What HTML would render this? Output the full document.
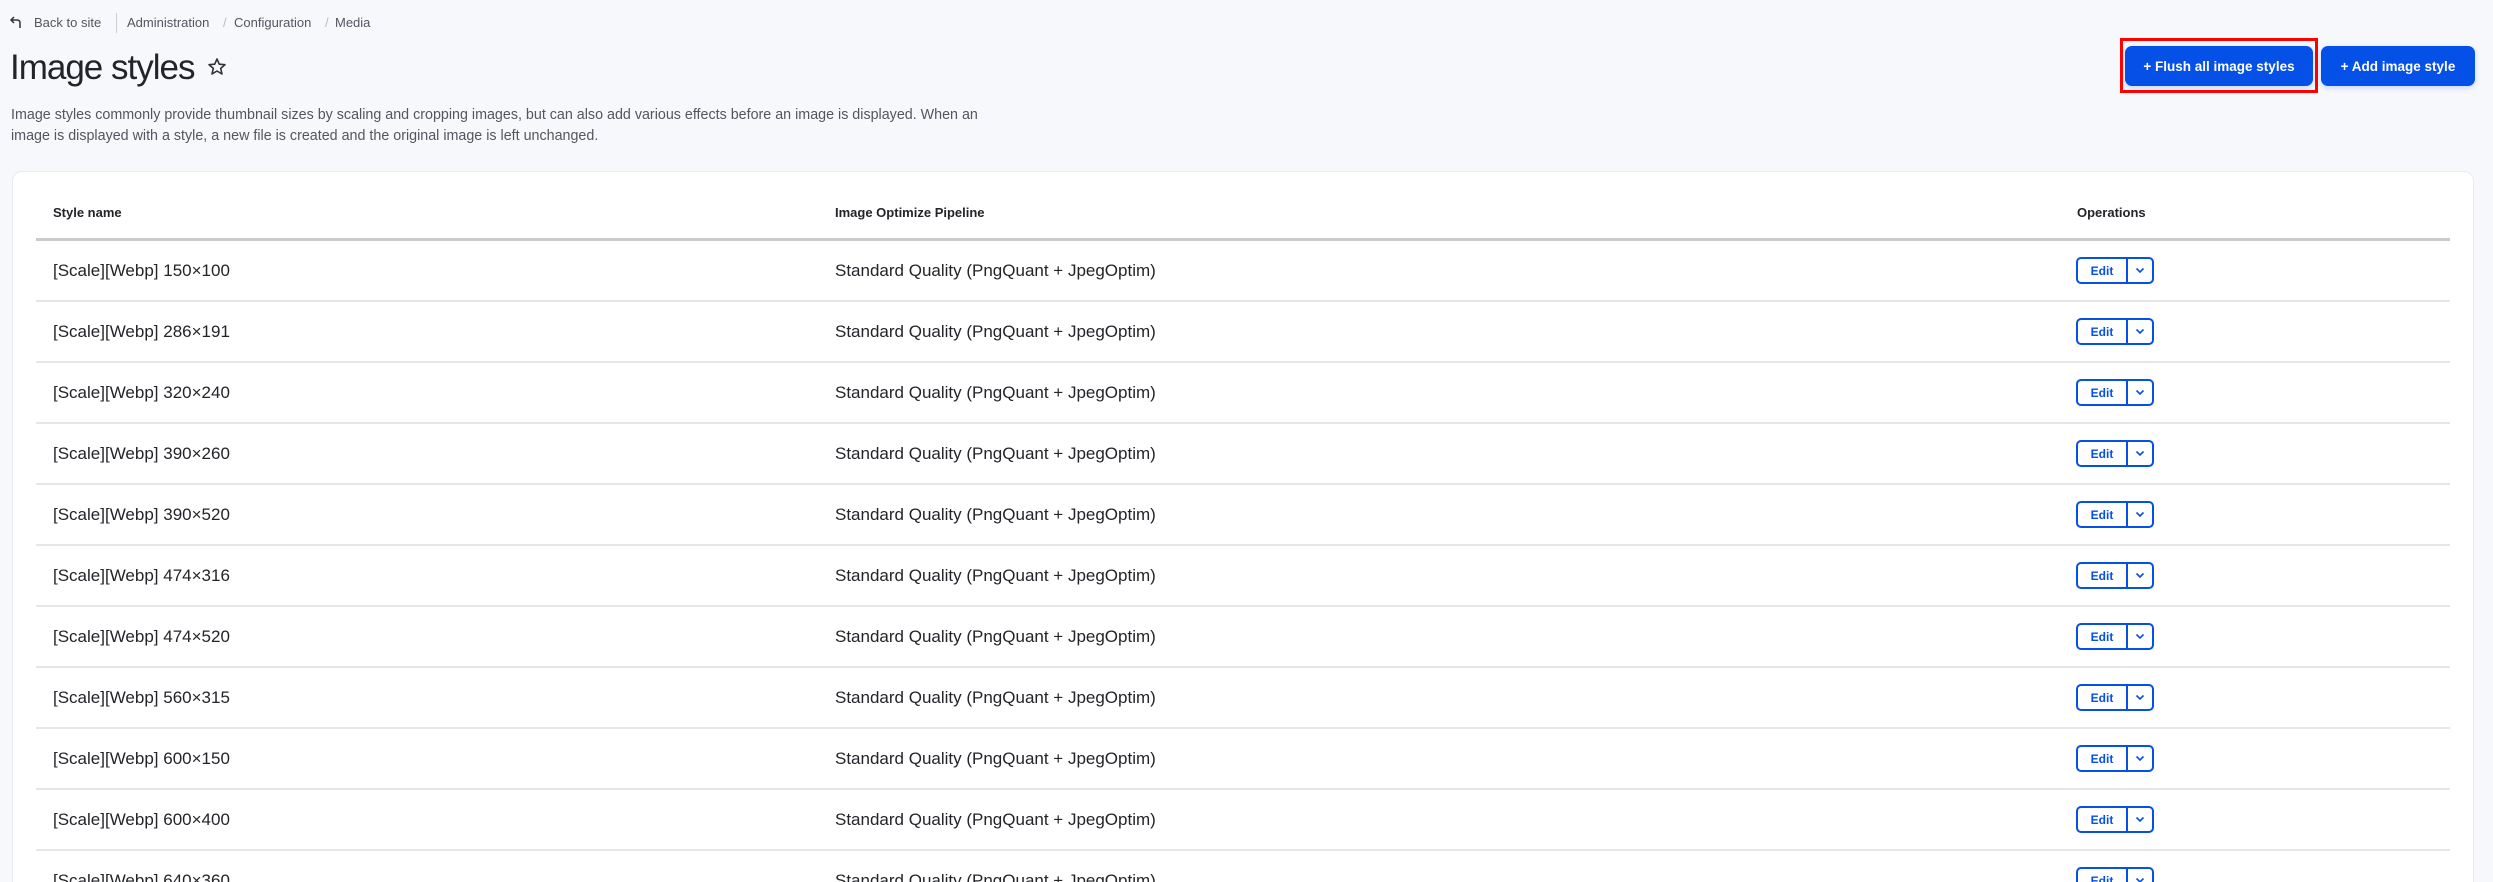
<!DOCTYPE html>
<html><head><meta charset="utf-8"><style>
*{box-sizing:border-box;margin:0;padding:0}
html,body{width:2493px;height:882px;overflow:hidden;background:#f7f8fc;font-family:"Liberation Sans",sans-serif;color:#232429}
#wrap{position:relative;width:2493px;height:882px;overflow:hidden}
.bc{position:absolute;top:15px;left:0;height:17px;font-size:13px;color:#545560}
.bc span{position:absolute;white-space:nowrap}
h1{position:absolute;left:10px;top:48px;font-size:35px;font-weight:normal;letter-spacing:-1px;color:#232429}
.desc{position:absolute;left:11px;top:105px;width:1005px;font-size:14.3px;line-height:21px;color:#545560}
.btn{position:absolute;top:46px;height:40px;background:#0550e6;color:#fff;border-radius:7px;font-size:13.5px;font-weight:bold;display:flex;align-items:center;justify-content:center;box-shadow:0 2px 6px rgba(5,80,230,.2)}
.red{position:absolute;left:2120px;top:38px;width:198px;height:55px;border:3px solid #f00}
.card{position:absolute;left:12px;top:171px;width:2462px;height:711px;background:#fff;border-radius:10px 10px 0 0;border:1px solid #e8e9ef;border-bottom:none}
.th{position:absolute;top:205px;font-size:13px;font-weight:bold;color:#232429}
.hl{position:absolute;left:36px;top:238px;width:2414px;height:3px;background:#cbcbce}
.row{position:absolute;left:36px;width:2414px;height:61px;border-bottom:2px solid #e6e6e9}
.row .a{position:absolute;left:17px;top:20px;font-size:17px;white-space:nowrap}
.row .b{position:absolute;left:799px;top:20px;font-size:17px;white-space:nowrap}
.edit{position:absolute;left:2040px;top:16px;width:78px;height:27px;border:2px solid #0550e6;border-radius:5px;display:flex}
.edit .e{width:50px;border-right:2px solid #0550e6;color:#0550e6;font-size:12px;font-weight:bold;display:flex;align-items:center;justify-content:center}
.edit .c{flex:1;display:flex;align-items:center;justify-content:center}
</style></head><body><div id="wrap">
<div class="bc">
<svg style="position:absolute;left:9px;top:0" width="14" height="14" viewBox="0 0 14 14"><path d="M5 2 L2 5 L5 8 M2 5 H8 Q11 5 11 8 V13" fill="none" stroke="#333" stroke-width="1.5"/></svg>
<span style="left:34px">Back to site</span>
<span style="left:116px;top:-2px;width:1px;height:20px;background:#ccc"></span>
<span style="left:127px">Administration</span>
<span style="left:223px;color:#bbb">/</span>
<span style="left:234px">Configuration</span>
<span style="left:325px;color:#bbb">/</span>
<span style="left:335px">Media</span>
</div>
<h1>Image styles</h1>
<svg style="position:absolute;left:207px;top:57px" width="20" height="20" viewBox="0 0 20 20"><path d="M10 2 L12.3 7.2 L18 7.7 L13.7 11.4 L15 17 L10 14 L5 17 L6.3 11.4 L2 7.7 L7.7 7.2 Z" fill="none" stroke="#333" stroke-width="1.6" stroke-linejoin="round"/></svg>
<div class="desc">Image styles commonly provide thumbnail sizes by scaling and cropping images, but can also add various effects before an image is displayed. When an image is displayed with a style, a new file is created and the original image is left unchanged.</div>
<div class="btn" style="left:2125px;width:188px">+ Flush all image styles</div>
<div class="red"></div>
<div class="btn" style="left:2321px;width:154px">+ Add image style</div>
<div class="card"></div>
<div class="th" style="left:53px">Style name</div>
<div class="th" style="left:835px">Image Optimize Pipeline</div>
<div class="th" style="left:2077px">Operations</div>
<div class="hl"></div>
<div class="row" style="top:241px"><span class="a">[Scale][Webp] 150×100</span><span class="b">Standard Quality (PngQuant + JpegOptim)</span><div class="edit"><div class="e">Edit</div><div class="c"><svg width="10" height="7" viewBox="0 0 10 7"><path d="M1.5 1.5 L5 5 L8.5 1.5" fill="none" stroke="#0550e6" stroke-width="1.6"/></svg></div></div></div>
<div class="row" style="top:302px"><span class="a">[Scale][Webp] 286×191</span><span class="b">Standard Quality (PngQuant + JpegOptim)</span><div class="edit"><div class="e">Edit</div><div class="c"><svg width="10" height="7" viewBox="0 0 10 7"><path d="M1.5 1.5 L5 5 L8.5 1.5" fill="none" stroke="#0550e6" stroke-width="1.6"/></svg></div></div></div>
<div class="row" style="top:363px"><span class="a">[Scale][Webp] 320×240</span><span class="b">Standard Quality (PngQuant + JpegOptim)</span><div class="edit"><div class="e">Edit</div><div class="c"><svg width="10" height="7" viewBox="0 0 10 7"><path d="M1.5 1.5 L5 5 L8.5 1.5" fill="none" stroke="#0550e6" stroke-width="1.6"/></svg></div></div></div>
<div class="row" style="top:424px"><span class="a">[Scale][Webp] 390×260</span><span class="b">Standard Quality (PngQuant + JpegOptim)</span><div class="edit"><div class="e">Edit</div><div class="c"><svg width="10" height="7" viewBox="0 0 10 7"><path d="M1.5 1.5 L5 5 L8.5 1.5" fill="none" stroke="#0550e6" stroke-width="1.6"/></svg></div></div></div>
<div class="row" style="top:485px"><span class="a">[Scale][Webp] 390×520</span><span class="b">Standard Quality (PngQuant + JpegOptim)</span><div class="edit"><div class="e">Edit</div><div class="c"><svg width="10" height="7" viewBox="0 0 10 7"><path d="M1.5 1.5 L5 5 L8.5 1.5" fill="none" stroke="#0550e6" stroke-width="1.6"/></svg></div></div></div>
<div class="row" style="top:546px"><span class="a">[Scale][Webp] 474×316</span><span class="b">Standard Quality (PngQuant + JpegOptim)</span><div class="edit"><div class="e">Edit</div><div class="c"><svg width="10" height="7" viewBox="0 0 10 7"><path d="M1.5 1.5 L5 5 L8.5 1.5" fill="none" stroke="#0550e6" stroke-width="1.6"/></svg></div></div></div>
<div class="row" style="top:607px"><span class="a">[Scale][Webp] 474×520</span><span class="b">Standard Quality (PngQuant + JpegOptim)</span><div class="edit"><div class="e">Edit</div><div class="c"><svg width="10" height="7" viewBox="0 0 10 7"><path d="M1.5 1.5 L5 5 L8.5 1.5" fill="none" stroke="#0550e6" stroke-width="1.6"/></svg></div></div></div>
<div class="row" style="top:668px"><span class="a">[Scale][Webp] 560×315</span><span class="b">Standard Quality (PngQuant + JpegOptim)</span><div class="edit"><div class="e">Edit</div><div class="c"><svg width="10" height="7" viewBox="0 0 10 7"><path d="M1.5 1.5 L5 5 L8.5 1.5" fill="none" stroke="#0550e6" stroke-width="1.6"/></svg></div></div></div>
<div class="row" style="top:729px"><span class="a">[Scale][Webp] 600×150</span><span class="b">Standard Quality (PngQuant + JpegOptim)</span><div class="edit"><div class="e">Edit</div><div class="c"><svg width="10" height="7" viewBox="0 0 10 7"><path d="M1.5 1.5 L5 5 L8.5 1.5" fill="none" stroke="#0550e6" stroke-width="1.6"/></svg></div></div></div>
<div class="row" style="top:790px"><span class="a">[Scale][Webp] 600×400</span><span class="b">Standard Quality (PngQuant + JpegOptim)</span><div class="edit"><div class="e">Edit</div><div class="c"><svg width="10" height="7" viewBox="0 0 10 7"><path d="M1.5 1.5 L5 5 L8.5 1.5" fill="none" stroke="#0550e6" stroke-width="1.6"/></svg></div></div></div>
<div class="row" style="top:851px;height:31px;border-bottom:none;overflow:hidden"><span class="a">[Scale][Webp] 640×360</span><span class="b">Standard Quality (PngQuant + JpegOptim)</span><div class="edit"><div class="e">Edit</div><div class="c"><svg width="10" height="7" viewBox="0 0 10 7"><path d="M1.5 1.5 L5 5 L8.5 1.5" fill="none" stroke="#0550e6" stroke-width="1.6"/></svg></div></div></div>
</div></body></html>
